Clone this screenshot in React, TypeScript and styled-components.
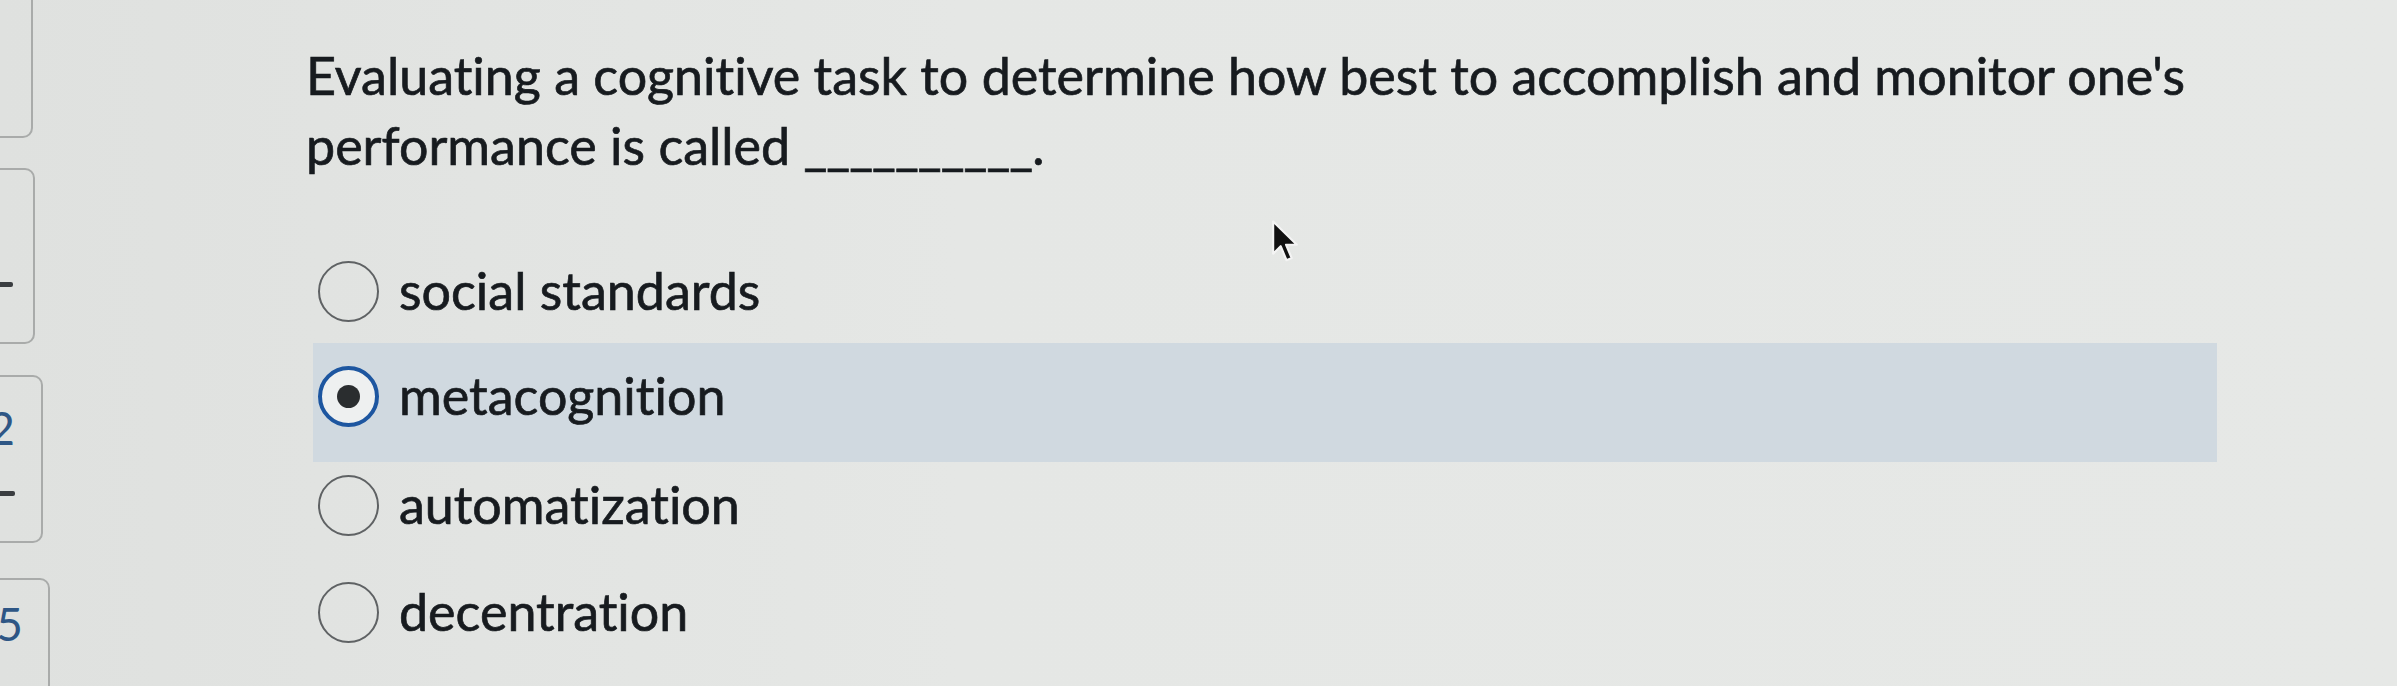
import React, { FunctionComponent } from 'react'
import styled, { createGlobalStyle } from 'styled-components'

const GlobalStyle = createGlobalStyle`
  html, body {
    margin: 0;
    padding: 0;
    background: #e3e5e3;
  }
  body {
    font-family: Lato, "Noto Sans", sans-serif;
    color: #171b1f;
    font-variant-ligatures: none;
  }
`

const Page = styled.div`
  display: flex;
  flex-direction: row;
  width: 2397px;
  height: 686px;
  overflow: hidden;
  background: linear-gradient(90deg, #dfe1df 0%, #e5e7e5 40%, #e6e8e6 100%);
  position: relative;
`

const NavColumn = styled.nav`
  width: 60px;
  flex-shrink: 0;
  overflow: hidden;
  display: flex;
  flex-direction: column;
`

const NavBox = styled.div<{ $top: number; $height: number; $right: number; $inset: number }>`
  margin-top: ${prop => prop.$top}px;
  margin-left: ${prop => prop.$right - 110}px;
  width: 110px;
  height: ${prop => prop.$height}px;
  border: 2px solid #a9abaa;
  border-radius: 10px;
  box-sizing: border-box;
  flex-shrink: 0;
  display: flex;
  flex-direction: column;
  align-items: flex-end;
  padding-right: ${prop => prop.$inset}px;
  font-family: Lato, sans-serif;
  font-size: 46px;
  color: #2e5685;
`

const NavNumber = styled.span<{ $offset: number }>`
  margin-top: ${prop => prop.$offset}px;
  line-height: 1;
`

const NavDash = styled.span<{ $offset: number }>`
  margin-top: ${prop => prop.$offset}px;
  width: 20px;
  height: 5px;
  border-radius: 2px;
  background: #3a3d40;
`

const Main = styled.main`
  flex: 1;
  padding-left: 246px;
  padding-top: 40px;
`

const Question = styled.p`
  margin: 0;
  font-size: 52px;
  line-height: 70px;
  font-weight: 400;
  color: #171b1f;
  -webkit-text-stroke: 0.7px #171b1f;
`

const Blank = styled.span`
  letter-spacing: -1px;
`

const OptionList = styled.div`
  margin-top: 58px;
  width: 1904px;
  margin-left: 7px;
  display: flex;
  flex-direction: column;
`

const Option = styled.label<{ $selected?: boolean }>`
  display: flex;
  align-items: center;
  gap: 20px;
  box-sizing: border-box;
  height: ${prop => (prop.$selected ? 119 : 107)}px;
  margin: ${prop => (prop.$selected ? '-2px 0 -10px' : '0')};
  padding: ${prop => (prop.$selected ? '0 0 12px 5px' : '0 0 0 5px')};
  background: ${prop => (prop.$selected ? '#d0d9e0' : 'transparent')};
  cursor: pointer;
`

const Radio = styled.span<{ $selected?: boolean }>`
  width: 61px;
  height: 61px;
  border-radius: 50%;
  box-sizing: border-box;
  border: ${prop => (prop.$selected ? '4.5px solid #1d56a0' : '2.5px solid #5f6264')};
  background: ${prop => (prop.$selected ? '#eef0f0' : 'transparent')};
  display: flex;
  align-items: center;
  justify-content: center;
  flex-shrink: 0;
`

const RadioDot = styled.span`
  width: 23px;
  height: 23px;
  border-radius: 50%;
  background: #2a2d2f;
`

const OptionText = styled.span`
  font-size: 52px;
  line-height: 1;
  color: #171b1f;
  -webkit-text-stroke: 0.7px #171b1f;
  padding-bottom: 4px;
`

const Pointer = styled.svg`
  position: absolute;
  left: 1271px;
  top: 219px;
  width: 28px;
  height: 48px;
`

const options = [
  { text: 'social standards', selected: false },
  { text: 'metacognition', selected: true },
  { text: 'automatization', selected: false },
  { text: 'decentration', selected: false },
]

const App: FunctionComponent = () => (
  <>
    <GlobalStyle />
    <Page>
      <NavColumn>
        <NavBox $top={-20} $height={158} $right={33} $inset={20} />
        <NavBox $top={30} $height={176} $right={35} $inset={20}>
          <NavDash $offset={112} />
        </NavBox>
        <NavBox $top={31} $height={168} $right={43} $inset={26}>
          <NavNumber $offset={28}>2</NavNumber>
          <NavDash $offset={40} />
        </NavBox>
        <NavBox $top={35} $height={140} $right={50} $inset={25}>
          <NavNumber $offset={21}>5</NavNumber>
        </NavBox>
      </NavColumn>
      <Main>
        <Question>
          Evaluating a cognitive task to determine how best to accomplish and monitor one's
          <br />
          performance is called <Blank>__________</Blank>.
        </Question>
        <OptionList>
          {options.map(option => (
            <Option key={option.text} $selected={option.selected}>
              <Radio $selected={option.selected}>{option.selected && <RadioDot />}</Radio>
              <OptionText>{option.text}</OptionText>
            </Option>
          ))}
        </OptionList>
      </Main>
      <Pointer viewBox="0 0 13 22">
        <path
          d="M1 1 L1 16 L4.5 12.5 L7.2 19 L9.6 18 L7 11.8 L12 11.8 Z"
          fill="#111"
          stroke="#f4f4f4"
          strokeWidth="1"
          strokeLinejoin="round"
        />
      </Pointer>
    </Page>
  </>
)

export default App
